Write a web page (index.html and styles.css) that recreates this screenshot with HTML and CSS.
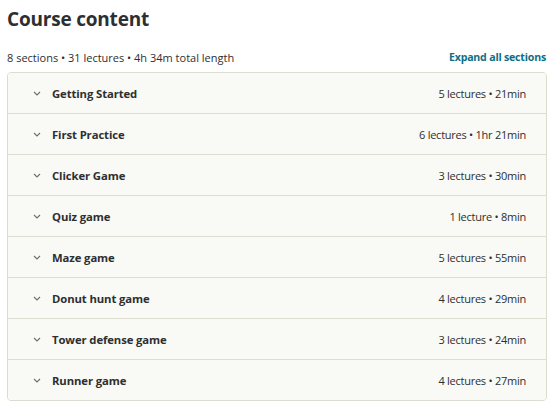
FILE: index.html
```html
<!DOCTYPE html>
<html>
<head>
<meta charset="utf-8">
<link rel="stylesheet" href="styles.css">
</head>
<body>
<div class="page">
  <h2 class="title">Course content</h2>
  <div class="summary">
    <span class="stats">8 sections • 31 lectures • 4h 34m total length</span>
    <a class="expand" href="#">Expand all sections</a>
  </div>
  <div class="sections">
    <div class="row"><span class="left"><svg class="chev" viewBox="0 0 8 5"><path d="M1 1l3 3 3-3"/></svg><span class="name">Getting Started</span></span><span class="meta">5 lectures • 21min</span></div>
    <div class="row"><span class="left"><svg class="chev" viewBox="0 0 8 5"><path d="M1 1l3 3 3-3"/></svg><span class="name">First Practice</span></span><span class="meta">6 lectures • 1hr 21min</span></div>
    <div class="row"><span class="left"><svg class="chev" viewBox="0 0 8 5"><path d="M1 1l3 3 3-3"/></svg><span class="name">Clicker Game</span></span><span class="meta">3 lectures • 30min</span></div>
    <div class="row"><span class="left"><svg class="chev" viewBox="0 0 8 5"><path d="M1 1l3 3 3-3"/></svg><span class="name">Quiz game</span></span><span class="meta">1 lecture • 8min</span></div>
    <div class="row"><span class="left"><svg class="chev" viewBox="0 0 8 5"><path d="M1 1l3 3 3-3"/></svg><span class="name">Maze game</span></span><span class="meta">5 lectures • 55min</span></div>
    <div class="row"><span class="left"><svg class="chev" viewBox="0 0 8 5"><path d="M1 1l3 3 3-3"/></svg><span class="name">Donut hunt game</span></span><span class="meta">4 lectures • 29min</span></div>
    <div class="row"><span class="left"><svg class="chev" viewBox="0 0 8 5"><path d="M1 1l3 3 3-3"/></svg><span class="name">Tower defense game</span></span><span class="meta">3 lectures • 24min</span></div>
    <div class="row"><span class="left"><svg class="chev" viewBox="0 0 8 5"><path d="M1 1l3 3 3-3"/></svg><span class="name">Runner game</span></span><span class="meta">4 lectures • 27min</span></div>
  </div>
</div>
</body>
</html>
```
FILE: styles.css
```css
* { box-sizing: border-box; }
html, body { margin: 0; padding: 0; background: #fff; }
body {
  font-family: "Open Sans", "Noto Sans", sans-serif;
  color: #2d2f31;
}
.page { padding: 7px 8px 0 7px; width: 554px; }
.title {
  margin: 0;
  font-size: 19px;
  font-weight: 700;
  line-height: 24px;
  letter-spacing: -0.2px;
}
.summary {
  display: flex;
  justify-content: space-between;
  align-items: center;
  margin-top: 18px;
  height: 16px;
  font-size: 11px;
}
.stats { color: #2d2f31; }
.expand {
  color: #0e6f85;
  font-weight: 700;
  font-size: 10.6px;
  letter-spacing: -0.2px;
  text-decoration: none;
}
.sections {
  margin-top: 7px;
  border: 1px solid #dcdcd0;
  border-radius: 4px;
  overflow: hidden;
  width: 540px;
}
.row {
  display: flex;
  justify-content: space-between;
  align-items: center;
  height: 41px;
  background: #f9f9f5;
  border-top: 1px solid #dcdcd0;
  padding: 0 20px 0 25px;
  font-size: 11px;
}
.row:first-child { border-top: none; height: 40px; }
.left { display: flex; align-items: center; }
.chev {
  width: 8px;
  height: 5px;
  fill: none;
  stroke: #6a6f73;
  stroke-width: 1.1;
  margin-right: 11px;
}
.name { font-weight: 700; font-size: 11.3px; letter-spacing: -0.1px; color: #2d2f31; }
.meta { color: #2d2f31; letter-spacing: -0.25px; }
```
